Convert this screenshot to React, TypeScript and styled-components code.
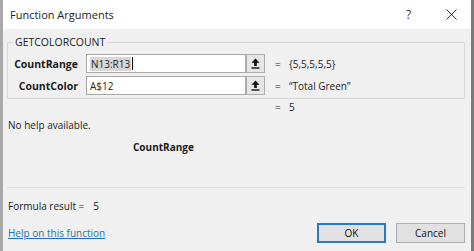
import React from "react";
import styled, { createGlobalStyle } from "styled-components";

const GlobalStyle = createGlobalStyle`
  html, body {
    margin: 0;
    padding: 0;
    background: #f0f0f0;
  }
  body {
    font-family: "Open Sans", "Noto Sans", sans-serif;
  }
`;

const Screen = styled.div`
  width: 474px;
  height: 251px;
  display: flex;
  overflow: hidden;
`;

const Edge = styled.div<{ $w: number; $c: string }>`
  width: ${(p) => p.$w}px;
  flex-shrink: 0;
  background: ${(p) => p.$c};
`;

const Dialog = styled.div`
  flex: 1;
  display: flex;
  flex-direction: column;
  background: #f0f0f0;
  color: #1b1b1b;
  font-size: 10px;
  line-height: 14px;
`;

const TitleBar = styled.div`
  height: 29px;
  flex-shrink: 0;
  display: flex;
  align-items: center;
  background: #ffffff;
  padding-left: 7px;
`;

const Title = styled.div`
  flex: 1;
  font-size: 11px;
  color: #222;
`;

const TitleButton = styled.div<{ $w: number }>`
  width: ${(p) => p.$w}px;
  height: 29px;
  display: flex;
  align-items: center;
  justify-content: center;
  font-size: 12px;
  color: #333;
`;

const Body = styled.div`
  flex: 1;
  display: flex;
  flex-direction: column;
  padding: 0 6px 0 4px;
`;

const GroupBox = styled.div`
  margin-top: 13px;
  border: 1px solid #d9d9d9;
  padding: 0 0 3px 0;
`;

const Legend = styled.div`
  width: fit-content;
  margin: -8px 0 0 5px;
  padding: 0 2px;
  background: #f0f0f0;
  font-size: 10.5px;
`;

const ArgRow = styled.div<{ $first?: boolean }>`
  display: flex;
  align-items: center;
  height: 19px;
  margin-top: ${(p) => (p.$first ? 5 : 3)}px;
`;

const ArgLabel = styled.div`
  width: 70px;
  margin-right: 8px;
  text-align: right;
  font-weight: 700;
  font-size: 10.5px;
`;

const Input = styled.div`
  width: 160px;
  height: 19px;
  box-sizing: border-box;
  border: 1px solid #a8a8a8;
  background: #fff;
  padding-left: 3px;
  display: flex;
  align-items: center;
  color: #222;
`;

const Selected = styled.span`
  background: #d6d6d6;
  padding: 0 1px;
`;

const Caret = styled.span`
  display: inline-block;
  width: 1px;
  height: 13px;
  background: #000;
  margin-left: 1px;
`;

const RefButton = styled.div`
  width: 19px;
  height: 19px;
  box-sizing: border-box;
  border: 1px solid #adadad;
  background: #e6e6e6;
  display: flex;
  align-items: center;
  justify-content: center;
`;

const Eq = styled.span`
  display: inline-block;
  width: 14px;
  margin-left: 10px;
`;

const ResultLine = styled.div`
  margin-top: 1px;
  padding-left: 258px;
`;

const NoHelp = styled.div`
  margin-top: 4px;
  padding-left: 1px;
`;

const ArgName = styled.div`
  margin-top: 8px;
  padding-left: 126px;
  font-weight: 700;
`;

const Separator = styled.div`
  margin-top: 33px;
  height: 1px;
  background: #dcdcdc;
`;

const FormulaResult = styled.div`
  margin-top: 11px;
  padding-left: 1px;
`;

const ResultValue = styled.span`
  margin-left: 9px;
`;

const Footer = styled.div`
  margin-top: 10px;
  display: flex;
  align-items: center;
  gap: 10px;
`;

const HelpLink = styled.a`
  flex: 1;
  padding-left: 1px;
  color: #1f6fc1;
  text-decoration: underline;
`;

const Button = styled.div<{ $primary?: boolean }>`
  width: 69px;
  height: 20px;
  box-sizing: border-box;
  display: flex;
  align-items: center;
  justify-content: center;
  background: #e1e1e1;
  border: ${(p) => (p.$primary ? "2px solid #2b79c6" : "1px solid #adadad")};
  color: #111;
`;

const UploadIcon = () => (
  <svg width="9" height="11" viewBox="0 0 9 11">
    <path d="M4.5 0.5 L8.5 4.8 L5.8 4.8 L5.8 8 L3.2 8 L3.2 4.8 L0.5 4.8 Z" fill="#111" />
    <rect x="0.5" y="9.3" width="8" height="1.4" fill="#111" />
  </svg>
);

const CloseIcon = () => (
  <svg width="11" height="11" viewBox="0 0 11 11">
    <path d="M0.5 0.5 L10.5 10.5 M10.5 0.5 L0.5 10.5" stroke="#333" strokeWidth="1" />
  </svg>
);

const args = [
  { name: "CountRange", value: "N13:R13", result: "{5,5,5,5,5}", focused: true },
  { name: "CountColor", value: "A$12", result: "\u201CTotal Green\u201D", focused: false },
];

export default function App() {
  return (
    <>
      <GlobalStyle />
      <Screen>
        <Edge $w={3} $c="#a9a9a9" />
        <Dialog>
          <TitleBar>
            <Title>Function Arguments</Title>
            <TitleButton $w={45}>?</TitleButton>
            <TitleButton $w={40}>
              <CloseIcon />
            </TitleButton>
          </TitleBar>
          <Body>
            <GroupBox>
              <Legend>GETCOLORCOUNT</Legend>
              {args.map((a, i) => (
                <ArgRow key={a.name} $first={i === 0}>
                  <ArgLabel>{a.name}</ArgLabel>
                  <Input>
                    {a.focused ? (
                      <>
                        <Selected>{a.value}</Selected>
                        <Caret />
                      </>
                    ) : (
                      a.value
                    )}
                  </Input>
                  <RefButton>
                    <UploadIcon />
                  </RefButton>
                  <Eq>=</Eq>
                  <span>{a.result}</span>
                </ArgRow>
              ))}
            </GroupBox>
            <ResultLine>
              <Eq>=</Eq>5
            </ResultLine>
            <NoHelp>No help available.</NoHelp>
            <ArgName>CountRange</ArgName>
            <Separator />
            <FormulaResult>
              Formula result =<ResultValue>5</ResultValue>
            </FormulaResult>
            <Footer>
              <HelpLink>Help on this function</HelpLink>
              <Button $primary>OK</Button>
              <Button>Cancel</Button>
            </Footer>
          </Body>
        </Dialog>
        <Edge $w={3} $c="#7a7a7a" />
      </Screen>
    </>
  );
}
